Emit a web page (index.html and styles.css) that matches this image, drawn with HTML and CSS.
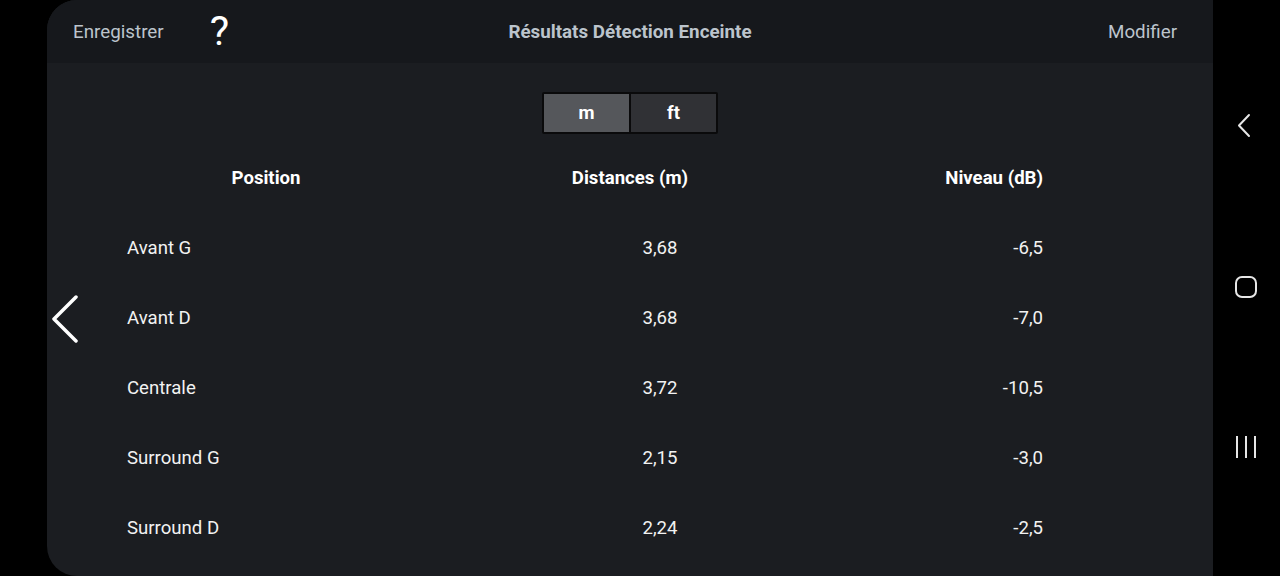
FILE: index.html
```html
<!DOCTYPE html>
<html lang="fr">

<head>
    <meta charset="UTF-8">
    <meta name="viewport" content="width=device-width, initial-scale=1.0">
    <title>Résultats Détection Enceinte</title>
    <link rel="stylesheet" href="styles.css">
</head>

<body>
    <div class="screen">
        <div class="panel">
            <div class="top-bar">
                <div class="top-left">
                    <span class="top-link">Enregistrer</span>
                    <span class="help">?</span>
                </div>
                <div class="title">Résultats Détection Enceinte</div>
                <div class="top-right">
                    <span class="top-link">Modifier</span>
                </div>
            </div>

            <button class="prev-btn" aria-label="Précédent">
                <svg width="30" height="50" viewBox="0 0 30 50">
                    <polyline points="26,2 4,24 26,46" fill="none" stroke="#fff" stroke-width="3.5" stroke-linecap="round" stroke-linejoin="round"/>
                </svg>
            </button>

            <div class="content">
                <div class="unit-switch">
                    <button class="unit active">m</button>
                    <button class="unit">ft</button>
                </div>

                <div class="results">
                    <div class="row head">
                        <div class="col-pos">Position</div>
                        <div class="col-dist">Distances (m)</div>
                        <div class="col-lvl">Niveau (dB)</div>
                    </div>
                    <div class="row">
                        <div class="col-pos">Avant G</div>
                        <div class="col-dist val">3,68</div>
                        <div class="col-lvl">-6,5</div>
                    </div>
                    <div class="row">
                        <div class="col-pos">Avant D</div>
                        <div class="col-dist val">3,68</div>
                        <div class="col-lvl">-7,0</div>
                    </div>
                    <div class="row">
                        <div class="col-pos">Centrale</div>
                        <div class="col-dist val">3,72</div>
                        <div class="col-lvl">-10,5</div>
                    </div>
                    <div class="row">
                        <div class="col-pos">Surround G</div>
                        <div class="col-dist val">2,15</div>
                        <div class="col-lvl">-3,0</div>
                    </div>
                    <div class="row">
                        <div class="col-pos">Surround D</div>
                        <div class="col-dist val">2,24</div>
                        <div class="col-lvl">-2,5</div>
                    </div>
                </div>
            </div>
        </div>

        <div class="nav-bar">
            <svg width="20" height="26" viewBox="0 0 20 26">
                <polyline points="13,2 3,12.5 13,23" fill="none" stroke="#e6e6e6" stroke-width="2" stroke-linecap="round" stroke-linejoin="round"/>
            </svg>
            <svg width="24" height="24" viewBox="0 0 24 24">
                <rect x="2" y="2" width="20" height="20" rx="6" fill="none" stroke="#e6e6e6" stroke-width="2"/>
            </svg>
            <svg width="24" height="24" viewBox="0 0 24 24">
                <line x1="3" y1="1" x2="3" y2="23" stroke="#e6e6e6" stroke-width="2"/>
                <line x1="12" y1="1" x2="12" y2="23" stroke="#e6e6e6" stroke-width="2"/>
                <line x1="21" y1="1" x2="21" y2="23" stroke="#e6e6e6" stroke-width="2"/>
            </svg>
        </div>
    </div>
</body>

</html>
```

FILE: styles.css
```css
* {
    margin: 0;
    padding: 0;
    box-sizing: border-box;
}

body {
    font-family: Roboto, 'Liberation Sans', sans-serif;
    background-color: #000;
    color: #f2f2f2;
    width: 1280px;
    height: 576px;
    overflow: hidden;
}

.screen {
    display: flex;
    height: 576px;
    padding-left: 47px;
}

/* Main panel */
.panel {
    position: relative;
    width: 1166px;
    height: 576px;
    background-color: #1b1d21;
    border-radius: 30px 0 0 30px;
    overflow: hidden;
    display: flex;
    flex-direction: column;
}

.top-bar {
    height: 63px;
    background-color: #16181c;
    display: grid;
    grid-template-columns: 1fr auto 1fr;
    align-items: center;
    padding: 0 36px;
}

.top-left {
    display: flex;
    align-items: center;
    gap: 46px;
    margin-left: -10px;
}

.top-right {
    display: flex;
    justify-content: flex-end;
}

.top-link {
    font-size: 18.8px;
    color: #bcc4cc;
}

.help {
    font-size: 41px;
    color: #fff;
    line-height: 1;
    margin-top: -1px;
}

.title {
    font-size: 18.8px;
    font-weight: bold;
    color: #bcc4cc;
}

.prev-btn {
    position: absolute;
    left: 3px;
    top: 295px;
    background: none;
    border: none;
    cursor: pointer;
}

.content {
    display: flex;
    flex-direction: column;
    align-items: center;
    padding-top: 29px;
}

/* m / ft switch */
.unit-switch {
    display: flex;
    gap: 2px;
    padding: 2px;
    background-color: #0a0a0b;
    border-radius: 2px;
}

.unit {
    width: 85px;
    height: 38px;
    border: none;
    background-color: #303135;
    color: #fff;
    font-family: inherit;
    font-size: 18.5px;
    font-weight: bold;
    cursor: pointer;
}

.unit.active {
    background-color: #55575b;
}

/* Results table */
.results {
    align-self: stretch;
    margin-top: 9px;
    padding-left: 80px;
}

.row {
    display: grid;
    grid-template-columns: 278px 450px 188px;
    height: 70px;
    align-items: center;
    font-size: 18.6px;
}

.row.head {
    font-weight: bold;
    color: #fff;
}

.head .col-pos,
.col-dist {
    text-align: center;
}

.col-dist.val {
    padding-left: 60px;
}

.col-lvl {
    text-align: right;
}

/* System nav */
.nav-bar {
    flex: 1;
    display: flex;
    flex-direction: column;
    align-items: center;
    padding-top: 113px;
    padding-right: 2px;
    gap: 136px;
}
```
